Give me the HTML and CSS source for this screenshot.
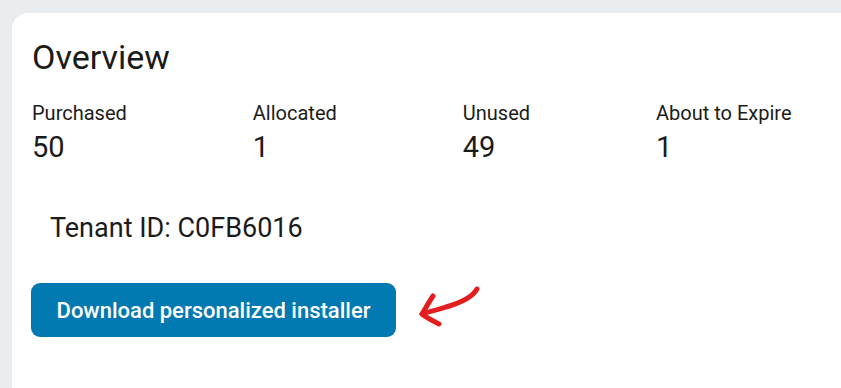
FILE: index.html
```html
<!DOCTYPE html>
<html>
<head>
<meta charset="utf-8">
<link rel="stylesheet" href="styles.css">
</head>
<body>
<div class="page">
  <section class="card">
    <h1 class="title">Overview</h1>
    <div class="stats">
      <div class="stat"><div class="label">Purchased</div><div class="value">50</div></div>
      <div class="stat"><div class="label">Allocated</div><div class="value">1</div></div>
      <div class="stat"><div class="label">Unused</div><div class="value">49</div></div>
      <div class="stat"><div class="label">About to Expire</div><div class="value">1</div></div>
    </div>
    <div class="tenant">Tenant ID: C0FB6016</div>
    <div class="actions">
      <button class="btn">Download personalized installer</button>
      <svg class="arrow" width="70" height="50" viewBox="0 0 70 50">
        <path d="M59 8 C54 17 42 22 28 26 C19 29 10 31 4 33" fill="none" stroke="#e31e1e" stroke-width="5" stroke-linecap="round"/>
        <path d="M15 15 C11 21 7 28 4 33 C9 37 15 40 21 43" fill="none" stroke="#e31e1e" stroke-width="5" stroke-linecap="round" stroke-linejoin="round"/>
      </svg>
    </div>
  </section>
</div>
</body>
</html>
```
FILE: styles.css
```css
html, body {
  margin: 0;
  padding: 0;
  background: #e9ecef;
  overflow: hidden;
  width: 841px;
  height: 388px;
}
.page {
  padding: 13px 0 0 12px;
}
.card {
  background: #ffffff;
  border-radius: 16px 0 0 0;
  width: 829px;
  height: 375px;
  box-sizing: border-box;
  padding: 24px 20px 0 20px;
  font-family: Roboto, "Liberation Sans", sans-serif;
  color: #1b1b1b;
}
.title {
  margin: 0;
  font-size: 34px;
  font-weight: 400;
  line-height: 40px;
}
.stats {
  display: flex;
  gap: 126px;
  margin-top: 24px;
}
.label {
  font-size: 20px;
  line-height: 24px;
}
.value {
  font-size: 29px;
  line-height: 34px;
  margin-top: 5px;
}
.tenant {
  margin: 47px 0 0 18px;
  font-size: 27px;
  line-height: 34px;
}
.actions {
  display: flex;
  align-items: center;
  margin-top: 38px;
}
.btn {
  width: 365px;
  height: 54px;
  border: none;
  border-radius: 9px;
  background: #0279b0;
  color: #ffffff;
  font-family: Roboto, "Liberation Sans", sans-serif;
  font-size: 22px;
  font-weight: 500;
  padding: 0;
  margin-left: -1px;
}
.arrow {
  margin-left: 22px;
  margin-top: -8px;
}
```
